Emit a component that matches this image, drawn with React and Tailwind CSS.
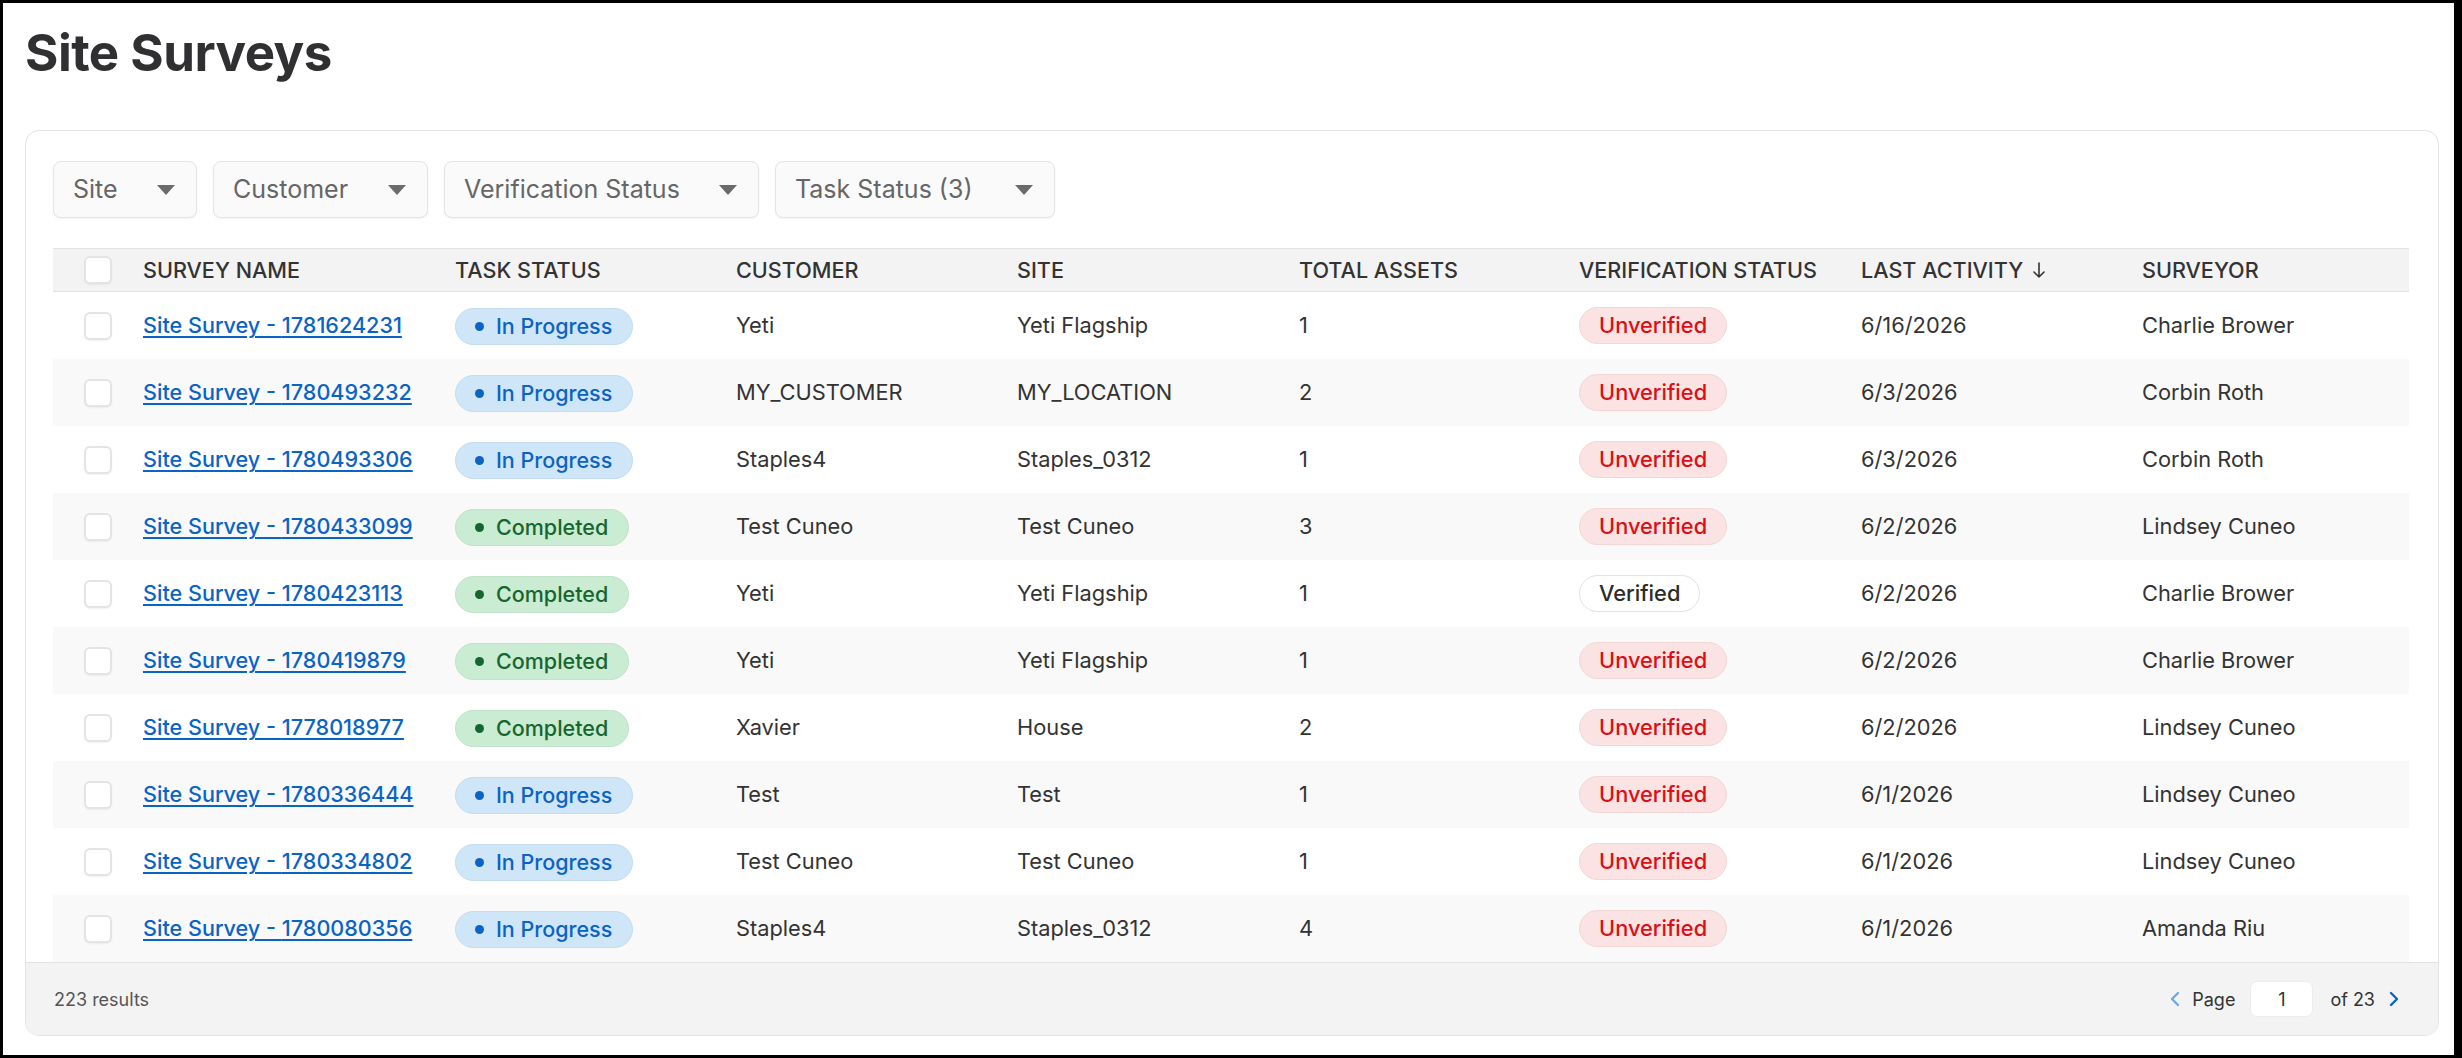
import React from "react";

const rows = [
  { id: "1781624231", task: "progress", customer: "Yeti", site: "Yeti Flagship", assets: 1, verified: false, last: "6/16/2026", surveyor: "Charlie Brower" },
  { id: "1780493232", task: "progress", customer: "MY_CUSTOMER", site: "MY_LOCATION", assets: 2, verified: false, last: "6/3/2026", surveyor: "Corbin Roth" },
  { id: "1780493306", task: "progress", customer: "Staples4", site: "Staples_0312", assets: 1, verified: false, last: "6/3/2026", surveyor: "Corbin Roth" },
  { id: "1780433099", task: "done", customer: "Test Cuneo", site: "Test Cuneo", assets: 3, verified: false, last: "6/2/2026", surveyor: "Lindsey Cuneo" },
  { id: "1780423113", task: "done", customer: "Yeti", site: "Yeti Flagship", assets: 1, verified: true, last: "6/2/2026", surveyor: "Charlie Brower" },
  { id: "1780419879", task: "done", customer: "Yeti", site: "Yeti Flagship", assets: 1, verified: false, last: "6/2/2026", surveyor: "Charlie Brower" },
  { id: "1778018977", task: "done", customer: "Xavier", site: "House", assets: 2, verified: false, last: "6/2/2026", surveyor: "Lindsey Cuneo" },
  { id: "1780336444", task: "progress", customer: "Test", site: "Test", assets: 1, verified: false, last: "6/1/2026", surveyor: "Lindsey Cuneo" },
  { id: "1780334802", task: "progress", customer: "Test Cuneo", site: "Test Cuneo", assets: 1, verified: false, last: "6/1/2026", surveyor: "Lindsey Cuneo" },
  { id: "1780080356", task: "progress", customer: "Staples4", site: "Staples_0312", assets: 4, verified: false, last: "6/1/2026", surveyor: "Amanda Riu" },
];

const filters = [
  { label: "Site", w: "w-[144px]" },
  { label: "Customer", w: "w-[215px]" },
  { label: "Verification Status", w: "w-[315px]" },
  { label: "Task Status (3)", w: "w-[280px]" },
];

const cols = "grid grid-cols-[90px_312px_281px_281px_282px_280px_282px_281px_1fr] items-center";

function Caret() {
  return (
    <svg width="18" height="10" viewBox="0 0 18 10" className="shrink-0">
      <path d="M0 0 H18 L9 10 Z" fill="#6b6b6b" />
    </svg>
  );
}

function Checkbox() {
  return (
    <span className="block w-[28px] h-[28px] rounded-[6px] border-2 border-[#e4e4e4] bg-white shadow-[0_1px_2px_rgba(0,0,0,0.06)]" />
  );
}

function TaskPill({ kind }) {
  const progress = kind === "progress";
  return (
    <span
      className={
        progress
          ? "inline-flex items-center h-[37px] pl-[19px] pr-[20px] rounded-full bg-[#cfe6f8] border border-[#c4dcef] text-[#0b63c4] text-[21.5px] font-medium"
          : "inline-flex items-center h-[37px] pl-[19px] pr-[20px] rounded-full bg-[#c9ecd3] border border-[#bfe2c9] text-[#17652f] text-[21.5px] font-medium"
      }
    >
      <span className={progress ? "w-[9px] h-[9px] rounded-full bg-[#0b63c4] mr-[12px]" : "w-[9px] h-[9px] rounded-full bg-[#17652f] mr-[12px]"} />
      {progress ? "In Progress" : "Completed"}
    </span>
  );
}

function VerifyPill({ ok }) {
  return ok ? (
    <span className="inline-flex items-center h-[37px] px-[19px] rounded-full bg-white border border-[#e2e2e2] text-[#2b2b2b] font-medium">
      Verified
    </span>
  ) : (
    <span className="inline-flex items-center h-[37px] px-[19px] rounded-full bg-[#fbe3e3] border border-[#f3d6d6] text-[#dc0f16] font-medium">
      Unverified
    </span>
  );
}

export default function App() {
  return (
    <div className="w-[2462px] h-[1058px] bg-white border-l-[3px] border-t-[3px] border-b-[3px] border-r-[8px] border-black font-['Inter',_'Liberation_Sans',_sans-serif] text-[#333333] overflow-hidden">
      <div className="pl-[22px] pr-[15px]">
        <h1 className="mt-[20px] text-[51px] leading-[60px] font-bold tracking-[-0.01em] text-[#303033]">Site Surveys</h1>

        <div className="mt-[47px] rounded-[14px] border border-[#e3e3e3] bg-white overflow-hidden">
          {/* filter bar */}
          <div className="flex gap-[16px] px-[27px] pt-[30px]">
            {filters.map((f) => (
              <button
                key={f.label}
                className={`${f.w} h-[57px] flex items-center justify-between pl-[19px] pr-[21px] rounded-[8px] border border-[#e4e4e4] bg-[#fafafa] shadow-[0_1px_2px_rgba(0,0,0,0.05)] text-[25px] text-[#666666]`}
              >
                <span>{f.label}</span>
                <Caret />
              </button>
            ))}
          </div>

          {/* table */}
          <div className="mt-[30px] pl-[27px] pr-[29px]">
            <div className={`${cols} h-[44px] bg-[#f3f3f3] border-t border-b border-[#e2e2e2] text-[21.6px] font-medium text-[#333333]`}>
              <div className="pl-[31px]">
                <Checkbox />
              </div>
              <div>SURVEY NAME</div>
              <div>TASK STATUS</div>
              <div>CUSTOMER</div>
              <div>SITE</div>
              <div>TOTAL ASSETS</div>
              <div>VERIFICATION STATUS</div>
              <div className="flex items-center gap-[8px]">
                LAST ACTIVITY
                <svg width="16" height="18" viewBox="0 0 16 18" fill="none" stroke="#333" strokeWidth="1.6" strokeLinecap="round" strokeLinejoin="round">
                  <path d="M8 2 V16 M3 11 L8 16 L13 11" />
                </svg>
              </div>
              <div>SURVEYOR</div>
            </div>

            {rows.map((r, i) => (
              <div
                key={r.id}
                className={`${cols} h-[67px] text-[21.8px] ${i % 2 === 1 ? "bg-[#f9f9f9]" : "bg-white"}`}
              >
                <div className="pl-[31px]">
                  <Checkbox />
                </div>
                <div>
                  <a href="#" className="text-[#0a64c6] text-[21.6px] font-medium underline underline-offset-[3px] decoration-[2px]">
                    Site Survey - {r.id}
                  </a>
                </div>
                <div>
                  <TaskPill kind={r.task} />
                </div>
                <div>{r.customer}</div>
                <div>{r.site}</div>
                <div>{r.assets}</div>
                <div>
                  <VerifyPill ok={r.verified} />
                </div>
                <div>{r.last}</div>
                <div>{r.surveyor}</div>
              </div>
            ))}
          </div>

          {/* footer */}
          <div className="h-[73px] bg-[#f3f3f3] border-t border-[#e2e2e2] flex items-center justify-between pl-[28px] pr-[37px]">
            <span className="text-[18px] text-[#555555]">223 results</span>
            <div className="flex items-center text-[18px] text-[#333333]">
              <svg width="14" height="18" viewBox="0 0 14 18" fill="none" stroke="#6fa8e2" strokeWidth="2.4" strokeLinecap="round" strokeLinejoin="round">
                <path d="M10 3 L4 9 L10 15" />
              </svg>
              <span className="ml-[10px]">Page</span>
              <span className="ml-[15px] w-[63px] h-[36px] rounded-[7px] bg-white border border-[#ececec] flex items-center justify-center">1</span>
              <span className="ml-[17px]">of 23</span>
              <svg className="ml-[12px]" width="14" height="18" viewBox="0 0 14 18" fill="none" stroke="#0a64c6" strokeWidth="2.4" strokeLinecap="round" strokeLinejoin="round">
                <path d="M4 3 L10 9 L4 15" />
              </svg>
            </div>
          </div>
        </div>
      </div>
    </div>
  );
}
